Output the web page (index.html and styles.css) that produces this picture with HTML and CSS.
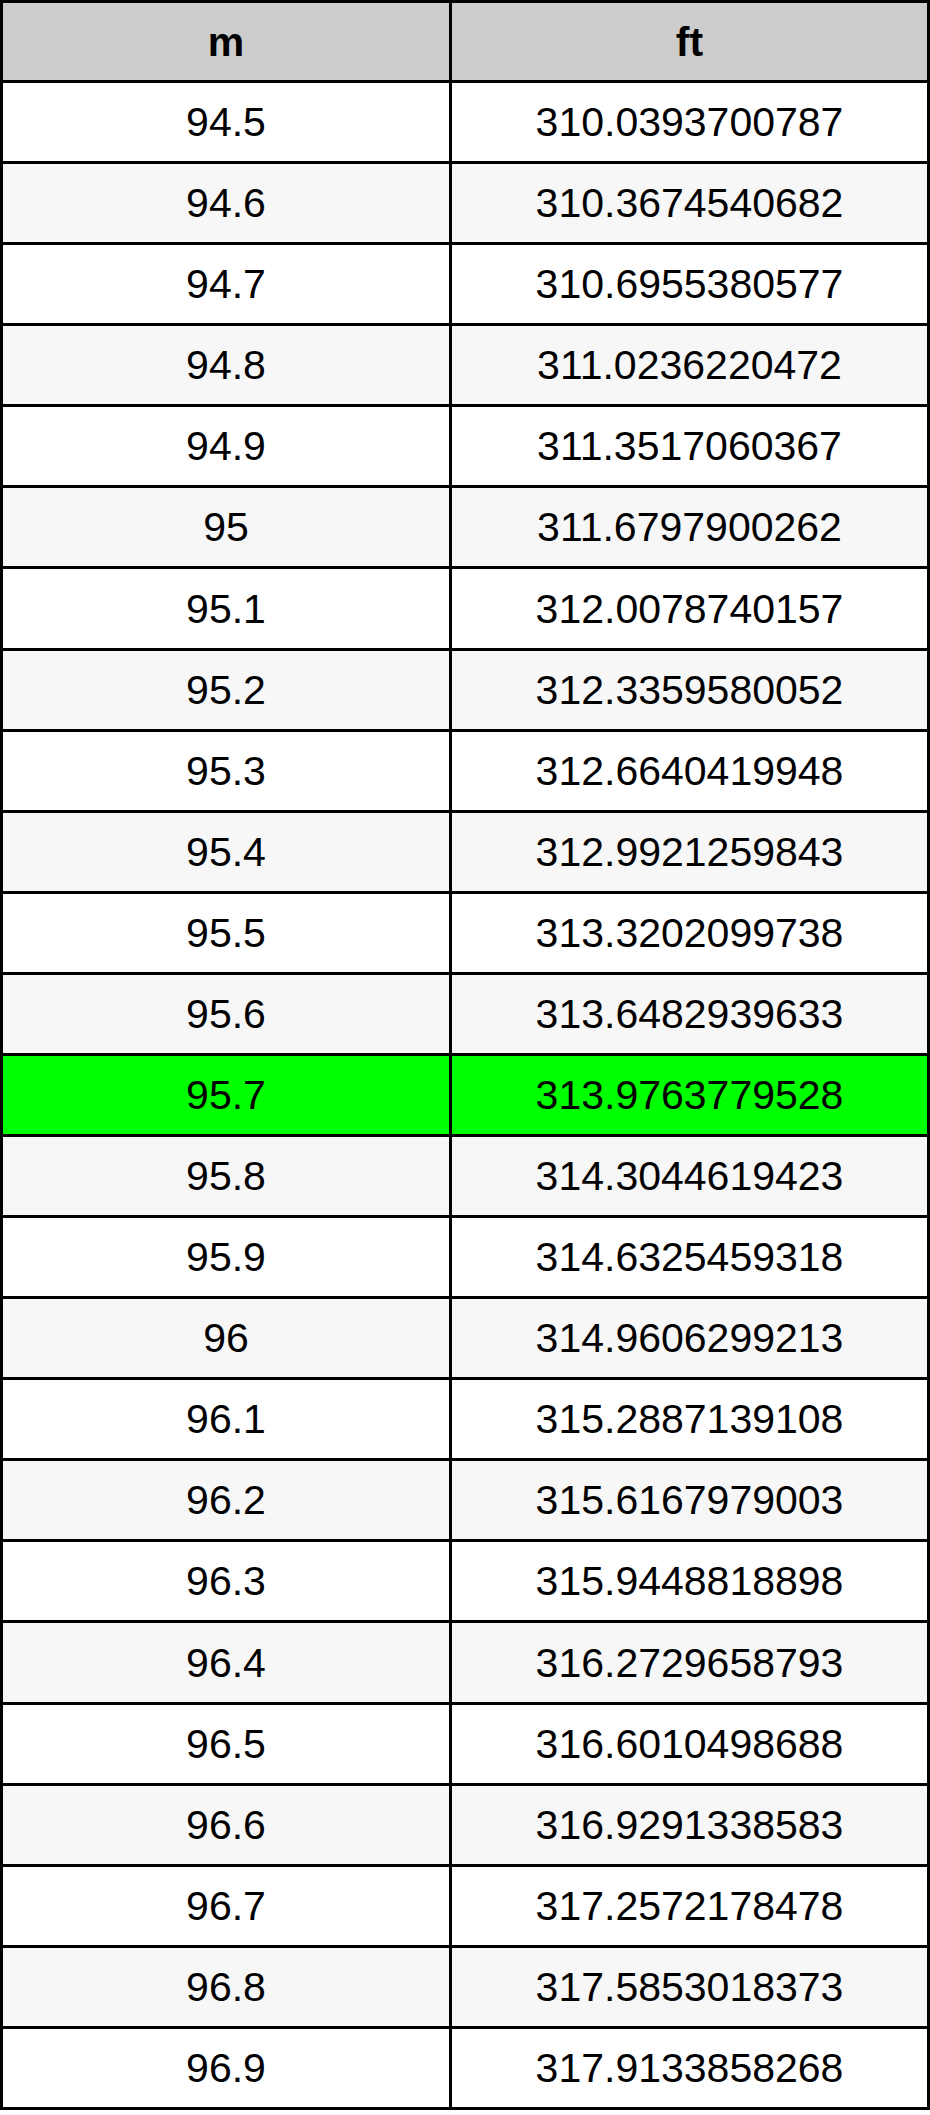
FILE: index.html
```html
<!DOCTYPE html>
<html>
<head>
<meta charset="utf-8">
<link rel="stylesheet" href="styles.css">
</head>
<body>
<table class="conv">
<colgroup><col class="c1"><col class="c2"></colgroup>
<thead>
<tr><th>m</th><th>ft</th></tr>
</thead>
<tbody>
<tr><td>94.5</td><td>310.0393700787</td></tr>
<tr class="alt"><td>94.6</td><td>310.3674540682</td></tr>
<tr><td>94.7</td><td>310.6955380577</td></tr>
<tr class="alt"><td>94.8</td><td>311.0236220472</td></tr>
<tr><td>94.9</td><td>311.3517060367</td></tr>
<tr class="alt"><td>95</td><td>311.6797900262</td></tr>
<tr><td>95.1</td><td>312.0078740157</td></tr>
<tr class="alt"><td>95.2</td><td>312.3359580052</td></tr>
<tr><td>95.3</td><td>312.6640419948</td></tr>
<tr class="alt"><td>95.4</td><td>312.9921259843</td></tr>
<tr><td>95.5</td><td>313.3202099738</td></tr>
<tr class="alt"><td>95.6</td><td>313.6482939633</td></tr>
<tr class="hl"><td>95.7</td><td>313.9763779528</td></tr>
<tr class="alt"><td>95.8</td><td>314.3044619423</td></tr>
<tr><td>95.9</td><td>314.6325459318</td></tr>
<tr class="alt"><td>96</td><td>314.9606299213</td></tr>
<tr><td>96.1</td><td>315.2887139108</td></tr>
<tr class="alt"><td>96.2</td><td>315.6167979003</td></tr>
<tr><td>96.3</td><td>315.9448818898</td></tr>
<tr class="alt"><td>96.4</td><td>316.2729658793</td></tr>
<tr><td>96.5</td><td>316.6010498688</td></tr>
<tr class="alt"><td>96.6</td><td>316.9291338583</td></tr>
<tr><td>96.7</td><td>317.2572178478</td></tr>
<tr class="alt"><td>96.8</td><td>317.5853018373</td></tr>
<tr><td>96.9</td><td>317.9133858268</td></tr>
</tbody>
</table>
</body>
</html>
```
FILE: styles.css
```css
html, body {
  margin: 0;
  padding: 0;
  background: #ffffff;
}

.conv {
  border-collapse: separate;
  border-spacing: 0;
  table-layout: fixed;
  width: 930px;
  border-right: 3px solid #000;
  border-bottom: 3px solid #000;
  font-family: "Liberation Sans", Arial, Helvetica, sans-serif;
  font-size: 41px;
  color: #000;
}

.conv .c1 { width: 449px; }
.conv .c2 { width: 478px; }

.conv th,
.conv td {
  border-left: 3px solid #000;
  border-top: 3px solid #000;
  padding: 0;
  text-align: center;
  vertical-align: middle;
  line-height: 46px;
}

.conv th {
  height: 77px;
  background: #cccccc;
  font-weight: bold;
}

.conv td {
  height: 78.08px;
  background: #ffffff;
  font-weight: normal;
}

.conv tr.alt td {
  background: #f7f7f7;
}

.conv tr.hl td {
  background: #00ff00;
}
```
